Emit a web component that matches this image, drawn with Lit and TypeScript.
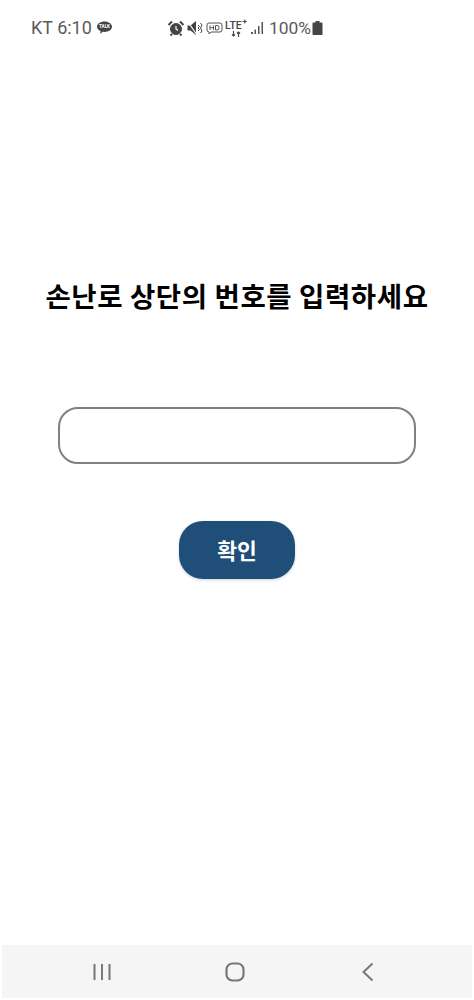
import { LitElement, html, css } from "lit";
import { customElement } from "lit/decorators.js";

@customElement("app-root")
export class AppRoot extends LitElement {
  static styles = css`
    :host { display: block; width: 474px; height: 1000px; background: #fff; overflow: hidden; font-family: Roboto, "Noto Sans CJK KR", sans-serif; }
    .page { height: 1000px; display: flex; flex-direction: column; }
    .status { height: 20px; margin-top: 18px; padding-left: 31px; display: flex; align-items: center; color: #5a5a5a; font-size: 18px; line-height: 20px; }
    .time { width: 65px; white-space: nowrap; font-weight: 400; }
    .talk { width: 17px; height: 16px; display: block; }
    .right { margin-left: 54px; display: flex; align-items: center; }
    .right svg { display: block; flex: none; }
    .pct { font-size: 17.4px; margin-left: 4px; width: 43px; white-space: nowrap; }
    main { flex: 1; display: flex; flex-direction: column; align-items: center; }
    h1 { margin: 237px 0 0; height: 40px; font: 700 27.5px/40px "Noto Sans CJK KR", sans-serif; letter-spacing: .6px; color: #000; white-space: nowrap; }
    .field { box-sizing: border-box; margin-top: 92px; width: 358px; height: 57px; border: 2px solid #808080; border-radius: 20px; background: #fff; display: block; padding: 0 16px; outline: none; }
    button { margin-top: 57px; width: 116px; height: 58px; border: 0; border-radius: 24px; background: #1f4e79; color: #fff; font: 700 21.5px/58px "Noto Sans CJK KR", sans-serif; box-shadow: 0 1px 3px rgba(31,78,121,.25); padding: 0; }
    nav { margin: 0 2px 2px; height: 53px; background: #f5f5f5; display: grid; grid-template-columns: 200px 66px 200px; align-items: center; justify-items: center; }
    nav svg { display: block; }
  `;

  render() {
    return html`<div class="page">
      <div class="status">
        <span class="time">KT 6:10</span>
        <svg class="talk" viewBox="0 0 17 16">
          <path fill="#444" d="M8.500 1.500c4.200 0 7.500 2.300 7.500 5.200s-3.300 5.200-7.500 5.200c-.6 0-1.100 0-1.700-.1L4.200 14l.5-2.900C2.400 10.200 1 8.600 1 6.700 1 3.800 4.300 1.500 8.500 1.500z"/>
          <text x="8.500" y="8.400" text-anchor="middle" font-size="4.600" font-weight="700" fill="#fff" font-family="Roboto">TALK</text>
        </svg>
        <div class="right">
          <svg width="18" height="18" viewBox="0 0 18 18" fill="none" stroke="#444">
            <circle cx="9" cy="10" r="5.500" fill="#444"/>
            <path d="M9 7v3l2 1.500" stroke="#fff" stroke-width="1.200"/>
            <path d="M1.500 6 5 2.500M16.500 6 13 2.500M5 15l-1.500 1.500M13 15l1.500 1.500" stroke-width="2"/>
          </svg>
          <svg style="margin-left:1px" width="18" height="18" viewBox="0 0 18 18" fill="none" stroke="#444">
            <path d="M1.500 6.500h3l5.500-4.500v14l-5.500-4.500h-3z" fill="#444" stroke="none"/>
            <path d="M2 3l9 13" stroke="#fff" stroke-width="1.200"/>
            <path d="M12 6l1.500 1.500L12 9l1.500 1.500L12 12M14.500 4l1.500 2-1.500 3 1.500 3-1.500 2" stroke-width="1"/>
          </svg>
          <svg style="margin-left:2px" width="17" height="18" viewBox="0 0 17 18" fill="none" stroke="#555" stroke-width="1">
            <path d="M3 4h11a2 2 0 0 1 2 2v5a2 2 0 0 1-2 2H5l-2 2v-2.100A2 2 0 0 1 1 11V6a2 2 0 0 1 2-2z"/>
            <path d="M4 6.500V11M7.500 6.500V11M4 8.700h3.500M9.500 6.500V11H11a2 2 0 0 0 2-2.200 2 2 0 0 0-2-2.300z"/>
          </svg>
          <svg style="margin-left:2px" width="23" height="22" viewBox="0 0 23 22" fill="#444">
            <text x="0" y="11.500" font-size="10.500" font-family="Roboto" font-weight="500">LTE</text>
            <text x="17.500" y="7" font-size="8" font-family="Roboto" font-weight="700">+</text>
            <path d="M8.500 14v5M7 17.500 8.500 19l1.500-1.500M13.500 20v-5M12 16.500l1.500-1.500 1.500 1.500" fill="none" stroke="#444" stroke-width="1.200"/>
          </svg>
          <svg style="margin-left:2px" width="15" height="16" viewBox="0 0 15 16" fill="#555">
            <rect x="1" y="12" width="2" height="2"/><rect x="4.500" y="9.500" width="1.500" height="4.500"/>
            <rect x="8" y="6" width="1.500" height="8"/><rect x="11.500" y="2" width="1.500" height="12"/>
          </svg>
          <span class="pct">100%</span>
          <svg style="margin-left:0" width="11" height="16" viewBox="0 0 11 16" fill="#444">
            <path d="M3.500 1h4v1.500H9.500a1 1 0 0 1 1 1V14a1 1 0 0 1-1 1h-8a1 1 0 0 1-1-1V3.500a1 1 0 0 1 1-1h2z"/>
          </svg>
        </div>
      </div>
      <main>
        <h1>손난로 상단의 번호를 입력하세요</h1>
        <input class="field" type="text" aria-label="번호" />
        <button type="button">확인</button>
      </main>
      <nav>
        <svg width="20" height="18" viewBox="0 0 20 18" fill="#777">
          <rect x="1.500" y="1" width="2" height="16"/><rect x="9" y="1" width="2" height="16"/><rect x="16.500" y="1" width="2" height="16"/>
        </svg>
        <svg width="20" height="20" viewBox="0 0 20 20" fill="none" stroke="#777" stroke-width="2.200">
          <rect x="1.500" y="1.500" width="17" height="17" rx="6"/>
        </svg>
        <svg width="14" height="20" viewBox="0 0 14 20" fill="none" stroke="#777" stroke-width="2">
          <path d="M11.500 1.500 2.500 10l9 8.500"/>
        </svg>
      </nav>
    </div>`;
  }
}
